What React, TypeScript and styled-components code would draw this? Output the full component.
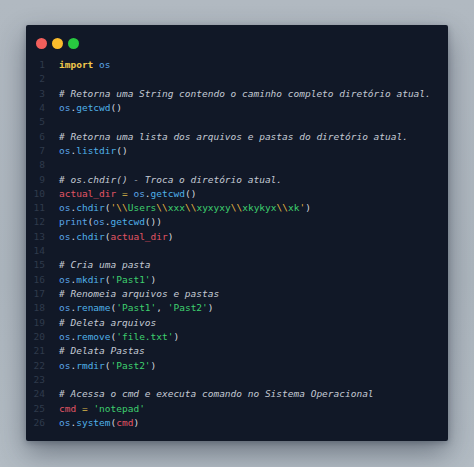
import React from "react";
import styled, { createGlobalStyle } from "styled-components";

const Global = createGlobalStyle`
  html, body { margin: 0; padding: 0; }
  body {
    width: 474px;
    height: 467px;
    overflow: hidden;
    background: linear-gradient(180deg, #b1b9c1 0%, #adb6be 60%, #b3bcc4 100%);
    font-family: "DejaVu Sans Mono", "Liberation Mono", monospace;
  }
`;

const Page = styled.div`
  padding: 25px 0 0 26px;
`;

const Window = styled.div`
  width: 422px;
  height: 416px;
  box-sizing: border-box;
  background: #111827;
  border-radius: 2px;
  box-shadow: 0 12px 28px rgba(30, 40, 55, 0.45), 0 2px 6px rgba(30, 40, 55, 0.3);
  padding: 13px 0 0 0;
  display: flex;
  flex-direction: column;
  gap: 10px;
`;

const Dots = styled.div`
  display: flex;
  gap: 5px;
  height: 11px;
  margin-left: 10px;
`;

const Dot = styled.span<{ $c: string }>`
  width: 11px;
  height: 11px;
  border-radius: 50%;
  background: ${(p) => p.$c};
`;

const Code = styled.div`
  display: flex;
  flex-direction: column;
  padding-left: 7px;
  margin-top: -1px;
  font-size: 9.5px;
  line-height: 14.32px;
  white-space: pre;
  color: #d1d5db;
`;

const Line = styled.div`
  display: grid;
  grid-template-columns: 12px 1fr;
  column-gap: 14px;
  height: 14.32px;
`;

const Num = styled.span`
  text-align: right;
  color: #2f3a4b;
`;

const Tok = styled.span<{ $k: string }>`
  color: ${(p) =>
    ({
      kw: "#f2c94c",
      mod: "#5aa4e6",
      fn: "#4fb0e8",
      cm: "#c3c9d3",
      str: "#3ecf6e",
      esc: "#e3b341",
      var: "#e15564",
      op: "#d8b64a",
      p: "#d1d5db",
    } as Record<string, string>)[p.$k]};
  font-style: ${(p) => (p.$k === "cm" ? "italic" : "normal")};
  font-weight: ${(p) => (p.$k === "kw" ? "bold" : "normal")};
`;

type T = [string, string];

const lines: T[][] = [
  [["kw", "import"], ["p", " "], ["mod", "os"]],
  [],
  [["cm", "# Retorna uma String contendo o caminho completo diretório atual."]],
  [["mod", "os"], ["p", "."], ["fn", "getcwd"], ["p", "()"]],
  [],
  [["cm", "# Retorna uma lista dos arquivos e pastas do diretório atual."]],
  [["mod", "os"], ["p", "."], ["fn", "listdir"], ["p", "()"]],
  [],
  [["cm", "# os.chdir() - Troca o diretório atual."]],
  [["var", "actual_dir"], ["p", " "], ["op", "="], ["p", " "], ["mod", "os"], ["p", "."], ["fn", "getcwd"], ["p", "()"]],
  [
    ["mod", "os"], ["p", "."], ["fn", "chdir"], ["p", "("], ["esc", "'"],
    ["esc", "\\\\"], ["str", "Users"], ["esc", "\\\\"], ["str", "xxx"], ["esc", "\\\\"],
    ["str", "xyxyxy"], ["esc", "\\\\"], ["str", "xkykyx"], ["esc", "\\\\"], ["str", "xk"],
    ["esc", "'"], ["p", ")"],
  ],
  [["mod", "print"], ["p", "("], ["mod", "os"], ["p", "."], ["fn", "getcwd"], ["p", "())"]],
  [["mod", "os"], ["p", "."], ["fn", "chdir"], ["p", "("], ["var", "actual_dir"], ["p", ")"]],
  [],
  [["cm", "# Cria uma pasta"]],
  [["mod", "os"], ["p", "."], ["fn", "mkdir"], ["p", "("], ["str", "'Past1'"], ["p", ")"]],
  [["cm", "# Renomeia arquivos e pastas"]],
  [["mod", "os"], ["p", "."], ["fn", "rename"], ["p", "("], ["str", "'Past1'"], ["p", ", "], ["str", "'Past2'"], ["p", ")"]],
  [["cm", "# Deleta arquivos"]],
  [["mod", "os"], ["p", "."], ["fn", "remove"], ["p", "("], ["str", "'file.txt'"], ["p", ")"]],
  [["cm", "# Delata Pastas"]],
  [["mod", "os"], ["p", "."], ["fn", "rmdir"], ["p", "("], ["str", "'Past2'"], ["p", ")"]],
  [],
  [["cm", "# Acessa o cmd e executa comando no Sistema Operacional"]],
  [["var", "cmd"], ["p", " "], ["op", "="], ["p", " "], ["str", "'notepad'"]],
  [["mod", "os"], ["p", "."], ["fn", "system"], ["p", "("], ["var", "cmd"], ["p", ")"]],
];

export default function App() {
  return (
    <>
      <Global />
      <Page>
        <Window>
          <Dots>
            <Dot $c="#f25f5c" />
            <Dot $c="#fbbc2c" />
            <Dot $c="#28c840" />
          </Dots>
          <Code>
            {lines.map((toks, i) => (
              <Line key={i}>
                <Num>{i + 1}</Num>
                <span>
                  {toks.map(([k, t], j) => (
                    <Tok key={j} $k={k}>
                      {t}
                    </Tok>
                  ))}
                </span>
              </Line>
            ))}
          </Code>
        </Window>
      </Page>
    </>
  );
}
